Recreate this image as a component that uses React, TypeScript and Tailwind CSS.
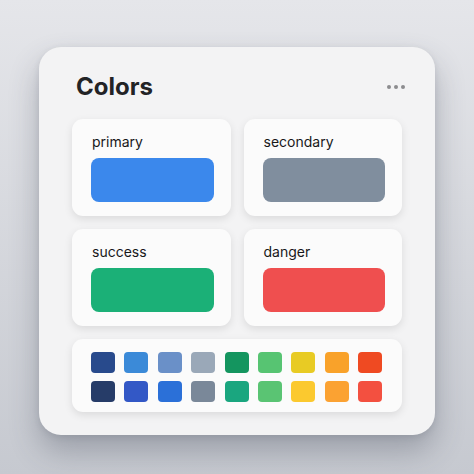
const swatches = [
  { name: "primary", color: "bg-[#3b88ec]" },
  { name: "secondary", color: "bg-[#808e9e]" },
  { name: "success", color: "bg-[#1bb077]" },
  { name: "danger", color: "bg-[#ef4f4f]" },
];

const palette = [
  ["bg-[#284a8c]", "bg-[#3b8ad8]", "bg-[#6a90c8]", "bg-[#9aa8b8]", "bg-[#14955f]", "bg-[#57c472]", "bg-[#e8cb24]", "bg-[#f9a22a]", "bg-[#ef4a22]"],
  ["bg-[#263c68]", "bg-[#3358c6]", "bg-[#2b70d8]", "bg-[#7a8899]", "bg-[#1aa67f]", "bg-[#5ac473]", "bg-[#fbc92f]", "bg-[#fba232]", "bg-[#f35040]"],
];

export default function App() {
  return (
    <main
      className="h-[474px] w-[474px] bg-gradient-to-b from-[#e5e6ea] to-[#c6c9d0] px-[39px] pt-[47px]"
      style={{ fontFamily: "Inter, 'Noto Sans', sans-serif" }}
    >
      <div className="h-[388px] rounded-[22px] bg-[#f3f3f4] px-[33px] pt-[25px] pb-[22px] shadow-[0_16px_30px_rgba(60,64,80,0.32),0_2px_6px_rgba(60,64,80,0.12)]">
        <div className="flex items-center justify-between">
          <h1 className="pl-[4px] text-[24px] leading-[30px] font-bold text-[#222326]">Colors</h1>
          <div className="mr-[-3px] flex gap-[2.5px]">
            <span className="h-[4.5px] w-[4.5px] rounded-full bg-[#8c8c8e]" />
            <span className="h-[4.5px] w-[4.5px] rounded-full bg-[#8c8c8e]" />
            <span className="h-[4.5px] w-[4.5px] rounded-full bg-[#8c8c8e]" />
          </div>
        </div>

        <div className="mt-[17px] grid grid-cols-2 gap-[13px]">
          {swatches.map((s) => (
            <div
              key={s.name}
              className="rounded-[11px] bg-[#fbfbfb] pt-[13px] pr-[17px] pb-[14px] pl-[19px] shadow-[0_3px_8px_rgba(0,0,0,0.1)]"
            >
              <p className="pl-[1px] text-[14px] leading-[20px] text-[#18181a]">{s.name}</p>
              <div className={`mt-[6px] h-[44px] rounded-[8px] ${s.color}`} />
            </div>
          ))}
        </div>

        <div className="mt-[13px] flex flex-col gap-[8px] rounded-[11px] bg-[#fbfbfb] pt-[13px] pr-[20px] pb-[10px] pl-[19px] shadow-[0_3px_8px_rgba(0,0,0,0.1)]">
          {palette.map((row, i) => (
            <div key={i} className="flex justify-between">
              {row.map((c) => (
                <span key={c} className={`h-[21px] w-[24px] rounded-[4px] ${c}`} />
              ))}
            </div>
          ))}
        </div>
      </div>
    </main>
  );
}
